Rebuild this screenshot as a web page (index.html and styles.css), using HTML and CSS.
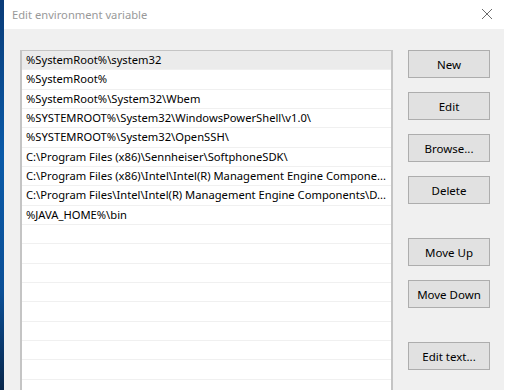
FILE: index.html
```html
<!DOCTYPE html>
<html>
<head>
<meta charset="utf-8">
<link rel="stylesheet" href="styles.css">
</head>
<body>
<div class="screen">
  <div class="desktop-left"></div>
  <div class="dialog">
    <div class="titlebar">
      <span class="title">Edit environment variable</span>
      <svg class="close" width="12" height="12" viewBox="0 0 12 12"><path d="M1 1 L11 11 M11 1 L1 11" stroke="#6b6b6b" stroke-width="1" fill="none"/></svg>
    </div>
    <div class="content">
      <div class="list">
        <div class="row selected">%SystemRoot%\system32</div>
        <div class="row">%SystemRoot%</div>
        <div class="row">%SystemRoot%\System32\Wbem</div>
        <div class="row">%SYSTEMROOT%\System32\WindowsPowerShell\v1.0\</div>
        <div class="row">%SYSTEMROOT%\System32\OpenSSH\</div>
        <div class="row">C:\Program Files (x86)\Sennheiser\SoftphoneSDK\</div>
        <div class="row">C:\Program Files (x86)\Intel\Intel(R) Management Engine Compone...</div>
        <div class="row">C:\Program Files\Intel\Intel(R) Management Engine Components\D...</div>
        <div class="row">%JAVA_HOME%\bin</div>
        <div class="row"></div>
        <div class="row"></div>
        <div class="row"></div>
        <div class="row"></div>
        <div class="row"></div>
        <div class="row"></div>
        <div class="row"></div>
        <div class="row"></div>
        <div class="row"></div>
      </div>
      <div class="buttons">
        <div class="group">
          <button class="btn">New</button>
          <button class="btn">Edit</button>
          <button class="btn">Browse...</button>
          <button class="btn">Delete</button>
        </div>
        <div class="group move">
          <button class="btn">Move Up</button>
          <button class="btn">Move Down</button>
        </div>
        <div class="group last">
          <button class="btn">Edit text...</button>
        </div>
      </div>
    </div>
  </div>
  <div class="desktop-right"></div>
</div>
</body>
</html>
```
FILE: styles.css
```css
html, body {
  margin: 0;
  padding: 0;
  width: 506px;
  height: 390px;
  overflow: hidden;
}
body {
  font-family: "Noto Sans", "Open Sans", sans-serif;
  font-size: 11.5px;
  color: #000;
}
.screen {
  display: flex;
  width: 506px;
  height: 390px;
}
.desktop-left {
  width: 4px;
  flex: none;
  background: linear-gradient(180deg, #0a3c78 0%, #0a5aa8 40%, #0b4f96 75%, #08264a 100%);
}
.desktop-right {
  width: 2px;
  flex: none;
  background: #ffffff;
}
.dialog {
  flex: 1;
  display: flex;
  flex-direction: column;
  background: #f0f0f0;
}
.titlebar {
  height: 29px;
  flex: none;
  background: #ffffff;
  display: flex;
  align-items: center;
  justify-content: space-between;
  padding: 0 11px 0 8px;
}
.title {
  color: #999999;
  font-size: 11.2px;
  margin-top: -1px;
}
.close {
  margin-top: -1px;
}
.content {
  flex: 1;
  display: flex;
  padding: 21px 14px 0 16px;
  gap: 15px;
  min-height: 0;
}
.list {
  width: 369px;
  flex: none;
  border: 1px solid #c4c4c4;
  border-bottom: none;
  border-left-width: 2px;
  border-right-width: 2px;
  background: #ffffff;
  overflow: hidden;
  font-size: 11.2px;
}
.row {
  height: 18.33px;
  line-height: 18px;
  border-bottom: 1px solid #f0f0f0;
  padding-left: 4px;
  white-space: nowrap;
  overflow: hidden;
}
.row.selected {
  background: #ebebeb;
}
.buttons {
  width: 82px;
  flex: none;
  display: flex;
  flex-direction: column;
}
.group {
  display: flex;
  flex-direction: column;
  gap: 14px;
}
.group.move {
  margin-top: 34px;
}
.group.last {
  margin-top: 34px;
}
.btn {
  height: 28px;
  width: 82px;
  background: #e1e1e1;
  border: 1px solid #adadad;
  font-family: inherit;
  font-size: 11.5px;
  color: #000;
  padding: 0;
}
```
